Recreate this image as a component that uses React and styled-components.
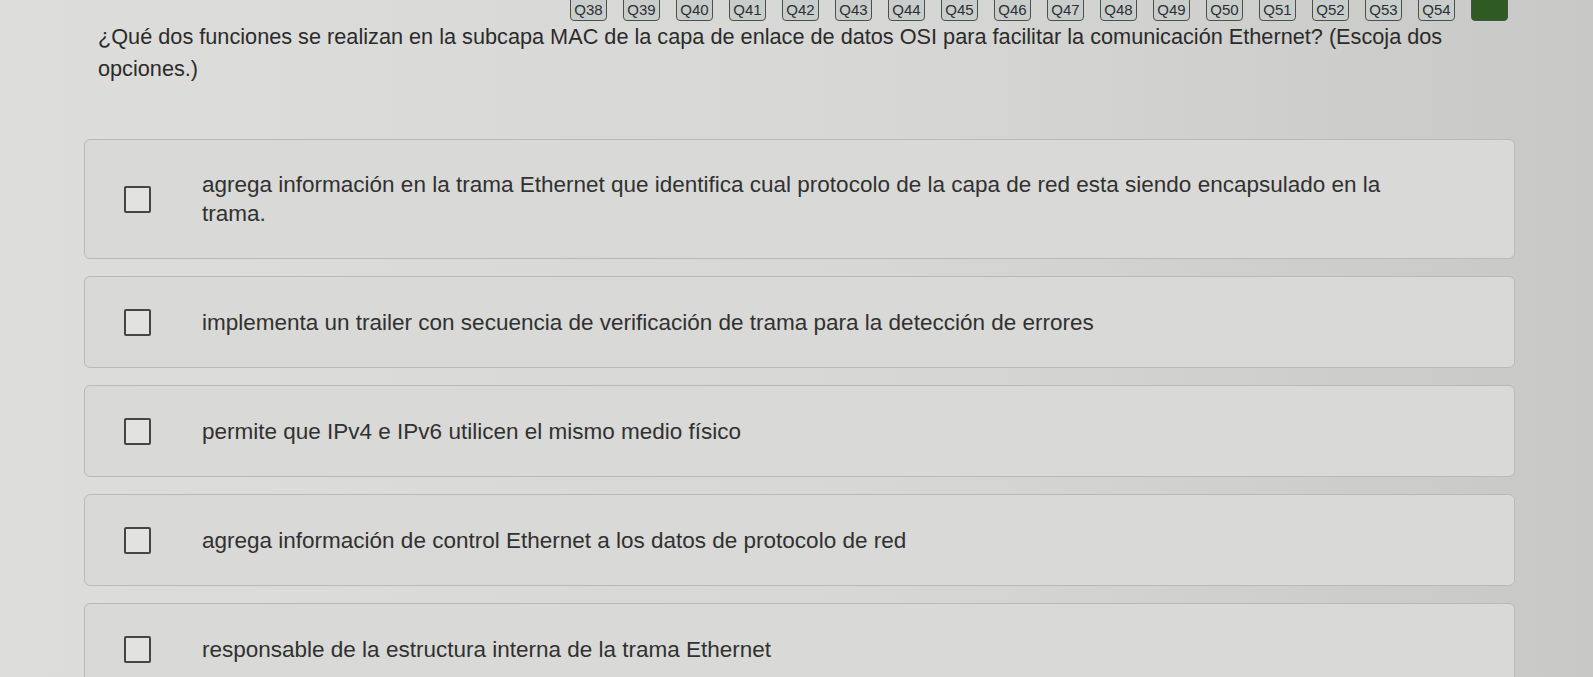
import React from "react";
import styled, { createGlobalStyle } from "styled-components";

const Global = createGlobalStyle`
  html, body { margin: 0; padding: 0; }
  body {
    background: #d5d5d3;
    font-family: "Liberation Sans", Arial, sans-serif;
    color: #353535;
    overflow: hidden;
  }
`;

const Page = styled.div`
  width: 1593px;
  height: 677px;
  overflow: hidden;
  background: linear-gradient(90deg, #dddddb 0%, #d7d7d5 55%, #c8c8c6 100%);
`;

const NavBar = styled.nav`
  height: 21px;
  display: flex;
  justify-content: flex-end;
  align-items: flex-end;
  gap: 16px;
  padding-right: 85px;
  overflow: hidden;
`;

const NavButton = styled.div`
  flex: 0 0 37px;
  height: 27px;
  box-sizing: border-box;
  padding-top: 6px;
  border: 1px solid #4d4f4e;
  border-radius: 4px;
  background: ${(p) => (p.$current ? "#2f5a24" : "#c9cdcb")};
  color: #2b3034;
  font-size: 15px;
  line-height: 17px;
  text-align: center;
`;

const Question = styled.p`
  margin: 0 0 0 98px;
  width: 1400px;
  font-size: 21.7px;
  line-height: 32px;
  color: #2b2b2b;
`;

const Options = styled.div`
  margin: 54px 0 0 84px;
  width: 1431px;
  display: flex;
  flex-direction: column;
  gap: 17px;
`;

const OptionCard = styled.label`
  display: flex;
  align-items: center;
  min-height: ${(p) => (p.$tall ? "120px" : "92px")};
  box-sizing: border-box;
  padding: 0 0 0 39px;
  border: 1px solid #b9b9b7;
  border-radius: 6px;
  background: #d9d9d7;
  cursor: pointer;
`;

const Box = styled.span`
  flex: 0 0 auto;
  width: 27px;
  height: 27px;
  box-sizing: border-box;
  border: 2px solid #454545;
  border-radius: 2px;
  background: #e2e2e0;
`;

const OptionText = styled.span`
  margin-left: 51px;
  max-width: 1195px;
  font-size: 22.5px;
  line-height: 29px;
  color: #313131;
`;

const buttons = [];
for (let i = 38; i <= 54; i++) buttons.push("Q" + i);

const options = [
  "agrega información en la trama Ethernet que identifica cual protocolo de la capa de red esta siendo encapsulado en la trama.",
  "implementa un trailer con secuencia de verificación de trama para la detección de errores",
  "permite que IPv4 e IPv6 utilicen el mismo medio físico",
  "agrega información de control Ethernet a los datos de protocolo de red",
  "responsable de la estructura interna de la trama Ethernet",
];

export default function App() {
  return (
    <Page>
      <Global />
      <NavBar>
        {buttons.map((b) => (
          <NavButton key={b}>{b}</NavButton>
        ))}
        <NavButton $current />
      </NavBar>
      <Question>
        ¿Qué dos funciones se realizan en la subcapa MAC de la capa de enlace de datos OSI para facilitar la comunicación Ethernet? (Escoja dos opciones.)
      </Question>
      <Options>
        {options.map((o, i) => (
          <OptionCard key={i} $tall={i === 0}>
            <Box />
            <OptionText>{o}</OptionText>
          </OptionCard>
        ))}
      </Options>
    </Page>
  );
}
